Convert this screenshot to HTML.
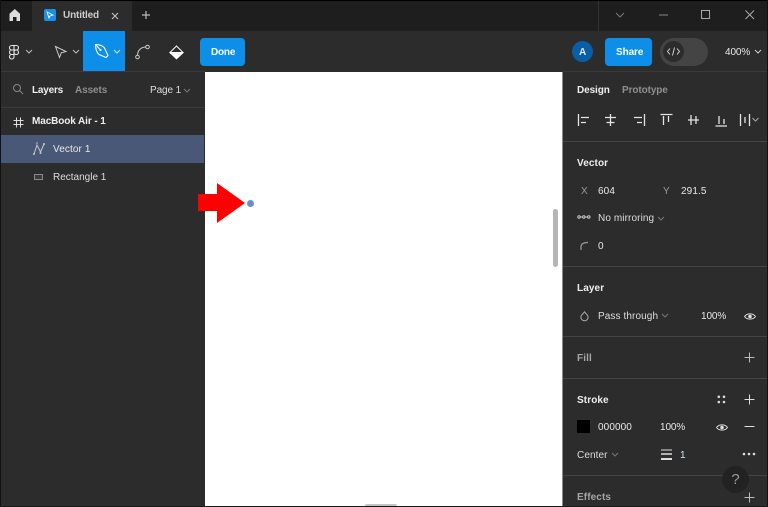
<!DOCTYPE html>
<html><head><meta charset="utf-8">
<style>
html,body{margin:0;padding:0;width:768px;height:507px;overflow:hidden;background:#2c2c2c}
body{position:relative;font-family:"Liberation Sans",sans-serif;color:#fff}
.a{position:absolute}
.t{position:absolute;font-size:10px;line-height:12px;white-space:nowrap;color:#e8e8e8;letter-spacing:.1px}
.b{font-weight:bold;color:#eee}
.g{color:#9a9a9a}
.h{position:absolute;background:#444;height:1px}
svg{position:absolute;overflow:visible;fill:none;stroke:#ddd;stroke-width:1}
</style></head><body>
<!-- title bar -->
<div class="a" style="left:0;top:0;width:768px;height:31px;background:#1e1e1e"></div>
<div class="a" style="left:0;top:0;width:768px;height:1px;background:#000"></div>
<div class="a" style="left:32px;top:1px;width:100px;height:30px;background:#2c2c2c"></div>
<div class="a" style="left:598px;top:1px;width:1px;height:30px;background:#333"></div>
<svg style="left:9px;top:9px" width="12" height="12"><path d="M0.500 12V4.800L5.800 0 11 4.800V12H7.500V8H4V12Z" fill="#ddd" stroke="none"/></svg>
<div class="a" style="left:44px;top:9px;width:12px;height:12px;background:#1b8fe6;border-radius:2px"></div>
<svg style="left:46px;top:11px" width="8" height="8"><path d="M1 1L7 4 4 5 3 7Z" stroke="#fff" stroke-width=".9"/></svg>
<div class="t b" style="left:63px;top:10px;color:#ccc;letter-spacing:-.15px">Untitled</div>
<svg style="left:110.500px;top:11.500px" width="8" height="8"><path d="M1 1L7 7M7 1L1 7" stroke="#bbb" stroke-width="1.200"/></svg>
<svg style="left:142px;top:11px" width="8" height="8"><path d="M4 0V8M0 4H8" stroke="#bbb" stroke-width="1.200"/></svg>
<svg style="left:615px;top:12px" width="10" height="6"><path d="M1 1L5 5 9 1" stroke="#777"/></svg>
<svg style="left:659px;top:14px" width="10" height="2"><path d="M0 1H9" stroke="#888"/></svg>
<svg style="left:701px;top:10px" width="10" height="10"><rect x=".5" y=".5" width="8" height="8" stroke="#aaa"/></svg>
<svg style="left:745px;top:10px" width="10" height="10"><path d="M.5 .5L9 9M9 .5L.5 9" stroke="#aaa"/></svg>
<!-- toolbar -->
<div class="a" style="left:0;top:31px;width:768px;height:41px;background:#2c2c2c"></div>
<div class="a" style="left:83px;top:31px;width:42px;height:41px;background:#0d8ee9"></div>
<div class="h" style="left:0;top:71px;width:205px;background:#3a3a3a"></div>
<div class="h" style="left:563px;top:71px;width:205px;background:#3a3a3a"></div>
<svg style="left:9px;top:45px" width="10" height="14"><path d="M5 .5H2.750a2.250 2.250 0 0 0 0 4.500H5ZM5 .5H7.250a2.250 2.250 0 0 1 0 4.500H5ZM5 5H2.750a2.250 2.250 0 0 0 0 4.500H5ZM9.500 7.250a2.250 2.250 0 1 1-4.500 0 2.250 2.250 0 0 1 4.500 0ZM5 9.500H2.750a2.250 2.250 0 1 0 2.250 2.250Z" stroke="#e4e4e4" stroke-width="1.100"/></svg>
<svg style="left:25px;top:49px" width="8" height="5"><path d="M1 1L4 4 7 1" stroke="#bbb"/></svg>
<svg style="left:55px;top:46px" width="12" height="12"><path d="M.5 .5L11 5.500 6.300 6.800 4.500 11.500Z" stroke="#ccc"/></svg>
<svg style="left:72px;top:49px" width="8" height="5"><path d="M1 1L4 4 7 1" stroke="#bbb"/></svg>
<svg style="left:95px;top:44px" width="14" height="15"><path d="M.5 .5C4.500 .5 7.500 1.500 9.500 4L13 11.500 11 13.500 4 10.500C1.800 8.500 .5 5 .5 .5Z M1 1L5 5.500" stroke="#fff" stroke-width="1.100"/><circle cx="5.500" cy="6" r="1.100" fill="#fff" stroke="none"/></svg>
<svg style="left:113px;top:49px" width="8" height="5"><path d="M1 1L4 4 7 1" stroke="#cfe6fa"/></svg>
<svg style="left:135px;top:44px" width="15" height="16"><path d="M2.500 11.500C2.500 6.500 6 3 11 3" stroke="#ccc"/><circle cx="2.500" cy="13" r="1.800" stroke="#ccc"/><circle cx="12.500" cy="3" r="1.800" stroke="#ccc"/></svg>
<svg style="left:169px;top:45px" width="15" height="15"><path d="M7.500 1L14 7.500H1Z" stroke="#fff"/><path d="M0 7.500H15L7.500 14.500Z" fill="#fff" stroke="none"/></svg>
<div class="a" style="left:200px;top:38px;width:45px;height:28px;background:#0d8ee9;border-radius:4px"></div>
<div class="t b" style="left:211px;top:46.500px;color:#fff;letter-spacing:-.2px">Done</div>
<div class="a" style="left:572px;top:41px;width:21px;height:21px;background:#0a5ea6;border-radius:50%"></div>
<div class="t b" style="left:579px;top:46.500px;color:#dce9f5">A</div>
<div class="a" style="left:605px;top:38px;width:47px;height:28px;background:#0d8ee9;border-radius:4px"></div>
<div class="t b" style="left:616px;top:46.500px;color:#fff;letter-spacing:-.1px">Share</div>
<div class="a" style="left:660px;top:38px;width:48px;height:28px;background:#444;border-radius:14px"></div>
<div class="a" style="left:663px;top:41px;width:21px;height:21px;background:#2c2c2c;border-radius:50%"></div>
<svg style="left:667px;top:47px" width="13" height="9"><path d="M3 1.500L.5 4.500 3 7.500M10 1.500L12.500 4.500 10 7.500M7.500 .5L5.500 8.500" stroke="#ddd" stroke-width=".9"/></svg>
<div class="t" style="left:725px;top:46.500px;letter-spacing:-.1px">400%</div>
<svg style="left:754px;top:49px" width="8" height="5"><path d="M1 1L4 4 7 1" stroke="#ccc"/></svg>
<!-- left panel -->
<div class="a" style="left:0;top:72px;width:205px;height:435px;background:#2c2c2c"></div>
<div class="h" style="left:0;top:107px;width:205px;background:#3a3a3a"></div>
<svg style="left:13px;top:84px" width="10" height="10"><circle cx="4" cy="4" r="3.500" stroke="#888"/><path d="M6.500 6.500L10 10" stroke="#888"/></svg>
<div class="t b" style="left:32px;top:84.500px;letter-spacing:-.2px">Layers</div>
<div class="t b g" style="left:75px;top:84.500px;color:#8f8f8f;letter-spacing:-.1px">Assets</div>
<div class="t" style="left:150px;top:84.500px;color:#ddd;letter-spacing:-.1px">Page 1</div>
<svg style="left:183px;top:88px" width="8" height="5"><path d="M1 1L4 4 7 1" stroke="#777"/></svg>
<svg style="left:13px;top:116.500px" width="11" height="11"><path d="M3.500 .5V10.500M7.500 .5V10.500M.5 3.500H10.500M.5 7.500H10.500" stroke="#ddd"/></svg>
<div class="t b" style="left:32px;top:115.500px;letter-spacing:-.1px">MacBook Air - 1</div>
<div class="a" style="left:1px;top:135px;width:203px;height:28px;background:#4a5878"></div>
<svg style="left:33px;top:142px" width="12" height="13"><path d="M1 12L4 3 7.500 10 11 2" stroke="#c8c8c8"/><g fill="#c8c8c8" stroke="none"><circle cx="1" cy="12" r="1"/><circle cx="4" cy="1" r=".8"/><circle cx="7.500" cy="11" r="1"/><circle cx="11" cy="2" r="1"/></g></svg>
<div class="t" style="left:53px;top:144px">Vector 1</div>
<svg style="left:34px;top:173px" width="10" height="8"><rect x=".5" y="1.500" width="8" height="5" stroke="#888" fill="#3a3a3a"/></svg>
<div class="t" style="left:53px;top:172px;color:#ddd;letter-spacing:0">Rectangle 1</div>
<!-- canvas -->
<div class="a" style="left:205px;top:72px;width:357px;height:434px;background:#fff"></div>
<div class="a" style="left:562px;top:72px;width:1px;height:435px;background:#8a8a8a"></div>
<div class="a" style="left:553px;top:209px;width:5px;height:58px;background:#b5b5b5;border-radius:3px"></div>
<div class="a" style="left:365px;top:504px;width:32px;height:2px;background:#c4c4c4;border-radius:2px 2px 0 0"></div>
<svg style="left:197px;top:182px" width="48" height="42"><path d="M1 12H20V1L48 21 20 41V29H1Z" fill="#ff0000" stroke="none"/></svg>
<div class="a" style="left:247px;top:199.500px;width:7px;height:7px;background:#4a9be8;border-radius:50%"></div>
<div class="a" style="left:249px;top:201.500px;width:3px;height:3px;background:#d9607a;border-radius:50%"></div>
<!-- right panel -->
<div class="a" style="left:563px;top:72px;width:205px;height:435px;background:#2c2c2c"></div>
<div class="t b" style="left:577px;top:84.500px;letter-spacing:-.1px">Design</div>
<div class="t b g" style="left:622px;top:84.500px;color:#8f8f8f;letter-spacing:-.1px">Prototype</div>
<svg style="left:577px;top:113px" width="190" height="15">
<path d="M1.500 1V13M4 4.500H12M4 9.500H9" stroke="#e4e4e4" stroke-width="1.300"/>
<path d="M33.500 1V13M28 4.500H39M29.500 9.500H37.500" stroke="#e4e4e4" stroke-width="1.300"/>
<path d="M67.500 1V13M57 4.500H65M60 9.500H65" stroke="#e4e4e4" stroke-width="1.300"/>
<path d="M83.500 1.500H95.500M86.500 3V12M91.500 3V9" stroke="#e4e4e4" stroke-width="1.300"/>
<path d="M111 7H122M114 2V12M119 3V11" stroke="#e4e4e4" stroke-width="1.300"/>
<path d="M138.500 13H150M142 3V11M147 6V11" stroke="#e4e4e4" stroke-width="1.300"/>
<path d="M163.500 1V13M172.500 1V13M168 4V10" stroke="#e4e4e4" stroke-width="1.300"/>
<path d="M175.500 5L178.500 8 181.500 5" stroke="#aaa"/>
</svg>
<div class="h" style="left:563px;top:141px;width:205px"></div>
<div class="t b" style="left:577px;top:157.500px">Vector</div>
<div class="t g" style="left:581px;top:185.500px">X</div>
<div class="t" style="left:598px;top:185.500px">604</div>
<div class="t g" style="left:663px;top:185.500px">Y</div>
<div class="t" style="left:681px;top:185.500px">291.5</div>
<svg style="left:577px;top:213px" width="14" height="8"><path d="M3 4H5M8.500 4H10.500" stroke="#ccc"/><circle cx="2" cy="4" r="1.200" stroke="#ccc"/><circle cx="6.800" cy="4" r="1.200" stroke="#ccc"/><circle cx="11.800" cy="4" r="1.200" stroke="#ccc"/></svg>
<div class="t" style="left:598px;top:212.500px;color:#ddd">No mirroring</div>
<svg style="left:657px;top:216px" width="8" height="5"><path d="M1 1L4 4 7 1" stroke="#777"/></svg>
<svg style="left:580px;top:241px" width="10" height="10"><path d="M1 9V6C1 3 3 1.500 8 1.500" stroke="#999" stroke-width="1.200"/></svg>
<div class="t" style="left:598px;top:240.500px">0</div>
<div class="h" style="left:563px;top:266px;width:205px"></div>
<div class="t b" style="left:577px;top:282.500px">Layer</div>
<svg style="left:580px;top:310.500px" width="9" height="11"><path d="M4.500 .8L2.500 3.200A3.600 3.600 0 1 0 6.500 3.200Z" stroke="#aaa"/></svg>
<div class="t" style="left:598px;top:310.500px;color:#ddd">Pass through</div>
<svg style="left:661px;top:313px" width="8" height="5"><path d="M1 1L4 4 7 1" stroke="#777"/></svg>
<div class="t" style="left:701px;top:310.500px;letter-spacing:-.1px">100%</div>
<svg style="left:743.500px;top:311.500px" width="12" height="9"><path d="M.5 4.500C3 1 9 1 11.500 4.500 9 8 3 8 .5 4.500Z" stroke="#ddd"/><circle cx="6" cy="4.500" r="1.800" fill="#ddd" stroke="none"/></svg>
<div class="h" style="left:563px;top:336px;width:205px"></div>
<div class="t b" style="left:577px;top:352.500px;color:#a5a5a5">Fill</div>
<svg style="left:744px;top:352px" width="11" height="11"><path d="M5.500 .5V10.500M.5 5.500H10.500" stroke="#bbb"/></svg>
<div class="h" style="left:563px;top:378px;width:205px"></div>
<div class="t b" style="left:577px;top:394.500px">Stroke</div>
<svg style="left:717px;top:395px" width="9" height="9"><g fill="#ddd" stroke="none"><circle cx="1.800" cy="1.800" r="1.300"/><circle cx="7" cy="1.800" r="1.300"/><circle cx="1.800" cy="7" r="1.300"/><circle cx="7" cy="7" r="1.300"/></g></svg>
<svg style="left:744px;top:394px" width="11" height="11"><path d="M5.500 .5V10.500M.5 5.500H10.500" stroke="#ddd"/></svg>
<div class="a" style="left:577px;top:420px;width:13px;height:13px;background:#000"></div>
<div class="t" style="left:598px;top:421.500px">000000</div>
<div class="t" style="left:660px;top:421.500px;letter-spacing:-.1px">100%</div>
<svg style="left:716px;top:422.500px" width="12" height="9"><path d="M.5 4.500C3 1 9 1 11.500 4.500 9 8 3 8 .5 4.500Z" stroke="#ddd"/><circle cx="6" cy="4.500" r="1.800" fill="#ddd" stroke="none"/></svg>
<svg style="left:744px;top:426px" width="11" height="2"><path d="M.5 .5H10.500" stroke="#ddd"/></svg>
<div class="t" style="left:577px;top:449.500px;color:#ddd">Center</div>
<svg style="left:611px;top:452px" width="8" height="5"><path d="M1 1L4 4 7 1" stroke="#777"/></svg>
<svg style="left:661px;top:448.500px" width="11" height="11"><path d="M0 1H11" stroke="#ddd"/><path d="M0 5H11" stroke="#ddd" stroke-width="1.500"/><path d="M0 10H11" stroke="#ddd" stroke-width="2"/></svg>
<div class="t" style="left:680px;top:449.500px;color:#cfe6f5">1</div>
<svg style="left:742px;top:452px" width="14" height="4"><g fill="#ddd" stroke="none"><circle cx="2" cy="2" r="1.300"/><circle cx="7" cy="2" r="1.300"/><circle cx="12" cy="2" r="1.300"/></g></svg>
<div class="h" style="left:563px;top:475px;width:205px"></div>
<div class="t b" style="left:577px;top:491.500px;color:#a5a5a5">Effects</div>
<svg style="left:744px;top:491.500px" width="11" height="11"><path d="M5.500 .5V10.500M.5 5.500H10.500" stroke="#bbb"/></svg>
<div class="a" style="left:722px;top:466px;width:27px;height:27px;background:#222;border-radius:50%"></div>
<div class="a" style="left:722px;top:471px;width:27px;text-align:center;font-size:15px;line-height:17px;color:#999">?</div>
<div class="a" style="left:0;top:0;width:1px;height:507px;background:#111"></div>
<div class="a" style="left:767px;top:0;width:1px;height:507px;background:#111"></div>
<div class="a" style="left:0;top:506px;width:768px;height:1px;background:#1a1a1a"></div>
</body></html>
